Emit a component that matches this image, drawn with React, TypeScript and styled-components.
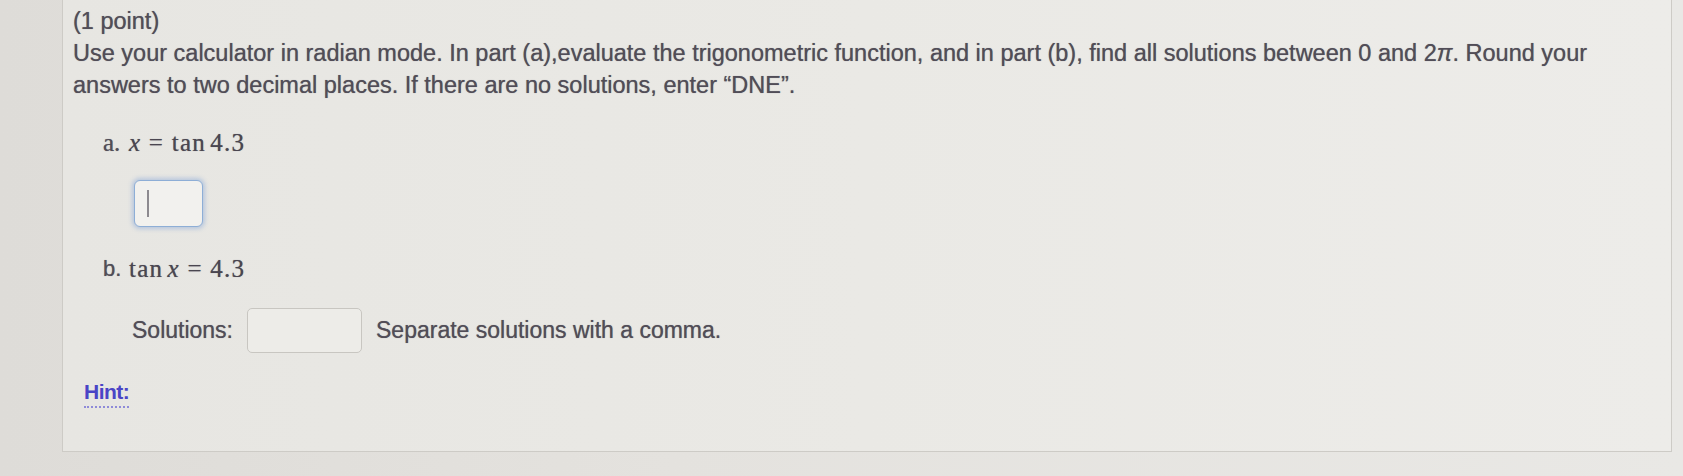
import React from "react";
import styled, { createGlobalStyle } from "styled-components";

const GlobalStyle = createGlobalStyle`
  html, body {
    margin: 0;
    padding: 0;
    background: #e3e1dd;
  }
  body {
    font-family: "Liberation Sans", Arial, sans-serif;
  }
`;

const Page = styled.div`
  width: 1683px;
  height: 476px;
  overflow: hidden;
  padding-left: 62px;
  box-sizing: border-box;
  background: linear-gradient(90deg, #dedcd8 0%, #e4e2de 40%, #e9e8e5 100%);
`;

const Panel = styled.div`
  width: 1610px;
  height: 452px;
  box-sizing: border-box;
  padding: 5px 0 0 10px;
  background: linear-gradient(90deg, #e7e6e2 0%, #eae9e5 50%, #edece9 100%);
  border: 1px solid #cdcbc6;
  border-top: none;
  color: #514d57;
  text-shadow: 0 0 0.7px rgba(70, 66, 78, 0.7);
`;

const Intro = styled.p`
  margin: 0;
  font-size: 23.5px;
  line-height: 32px;
`;

const Parts = styled.ol`
  list-style: none;
  margin: 26px 0 0 0;
  padding: 0;
`;

const Part = styled.li<{ $gap?: number }>`
  display: grid;
  grid-template-columns: 30px 26px auto;
  margin-top: ${({ $gap }) => $gap ?? 0}px;
`;

const Marker = styled.span<{ $serif?: boolean }>`
  grid-column: 2;
  font-family: ${({ $serif }) =>
    $serif ? `"Liberation Serif", "Times New Roman", serif` : `"Liberation Sans", Arial, sans-serif`};
  font-size: ${({ $serif }) => ($serif ? 25 : 22)}px;
  line-height: 32px;
`;

const Body = styled.div`
  grid-column: 3;
  display: flex;
  flex-direction: column;
  align-items: flex-start;
`;

const Math = styled.span`
  font-family: "Liberation Serif", "Times New Roman", serif;
  font-size: 25px;
  letter-spacing: 0.05em;
  line-height: 32px;
  color: #4a4650;
  white-space: nowrap;
`;

const Var = styled.i`
  font-style: italic;
`;

const Op = styled.span`
  margin: 0 0.3em;
`;

const Fn = styled.span`
  margin-right: 0.17em;
`;

const FocusedInput = styled.div`
  position: relative;
  margin: 21px 0 0 5px;
  width: 69px;
  height: 47px;
  box-sizing: border-box;
  border: 1px solid #8eaed6;
  border-radius: 6px;
  background: #f2f1ee;
  box-shadow: 0 0 4px 2px rgba(125, 160, 215, 0.45);
`;

const Caret = styled.span`
  position: absolute;
  left: 12px;
  top: 9px;
  width: 2px;
  height: 27px;
  background: #8d8a8f;
`;

const AnswerRow = styled.div`
  display: flex;
  align-items: center;
  gap: 14px;
  margin: 23px 0 0 3px;
  font-size: 23px;
`;

const AnswerBox = styled.div`
  width: 115px;
  height: 45px;
  box-sizing: border-box;
  border: 1px solid #c8c6c1;
  border-radius: 5px;
  background: #edece8;
`;

const Hint = styled.a`
  display: inline-block;
  margin: 28px 0 0 11px;
  font-size: 21px;
  font-weight: bold;
  line-height: 22px;
  letter-spacing: -0.5px;
  color: #4a44c6;
  text-shadow: none;
  text-decoration: none;
  border-bottom: 2px dotted #8f8bd8;
  padding-bottom: 3px;
`;

export default function App() {
  return (
    <>
      <GlobalStyle />
      <Page>
        <Panel>
          <Intro>
            (1 point)
            <br />
            Use your calculator in radian mode. In part (a),evaluate the trigonometric
            function, and in part (b), find all solutions between 0 and 2<Var>π</Var>. Round
            your
            <br />
            answers to two decimal places. If there are no solutions, enter “DNE”.
          </Intro>

          <Parts>
            <Part>
              <Marker $serif>a.</Marker>
              <Body>
                <Math>
                  <Var>x</Var>
                  <Op>=</Op>
                  <Fn>tan</Fn>4.3
                </Math>
                <FocusedInput>
                  <Caret />
                </FocusedInput>
              </Body>
            </Part>

            <Part $gap={26}>
              <Marker>b.</Marker>
              <Body>
                <Math>
                  <Fn>tan</Fn>
                  <Var>x</Var>
                  <Op>=</Op>4.3
                </Math>
                <AnswerRow>
                  <span>Solutions:</span>
                  <AnswerBox />
                  <span>Separate solutions with a comma.</span>
                </AnswerRow>
              </Body>
            </Part>
          </Parts>

          <Hint href="#">Hint:</Hint>
        </Panel>
      </Page>
    </>
  );
}
